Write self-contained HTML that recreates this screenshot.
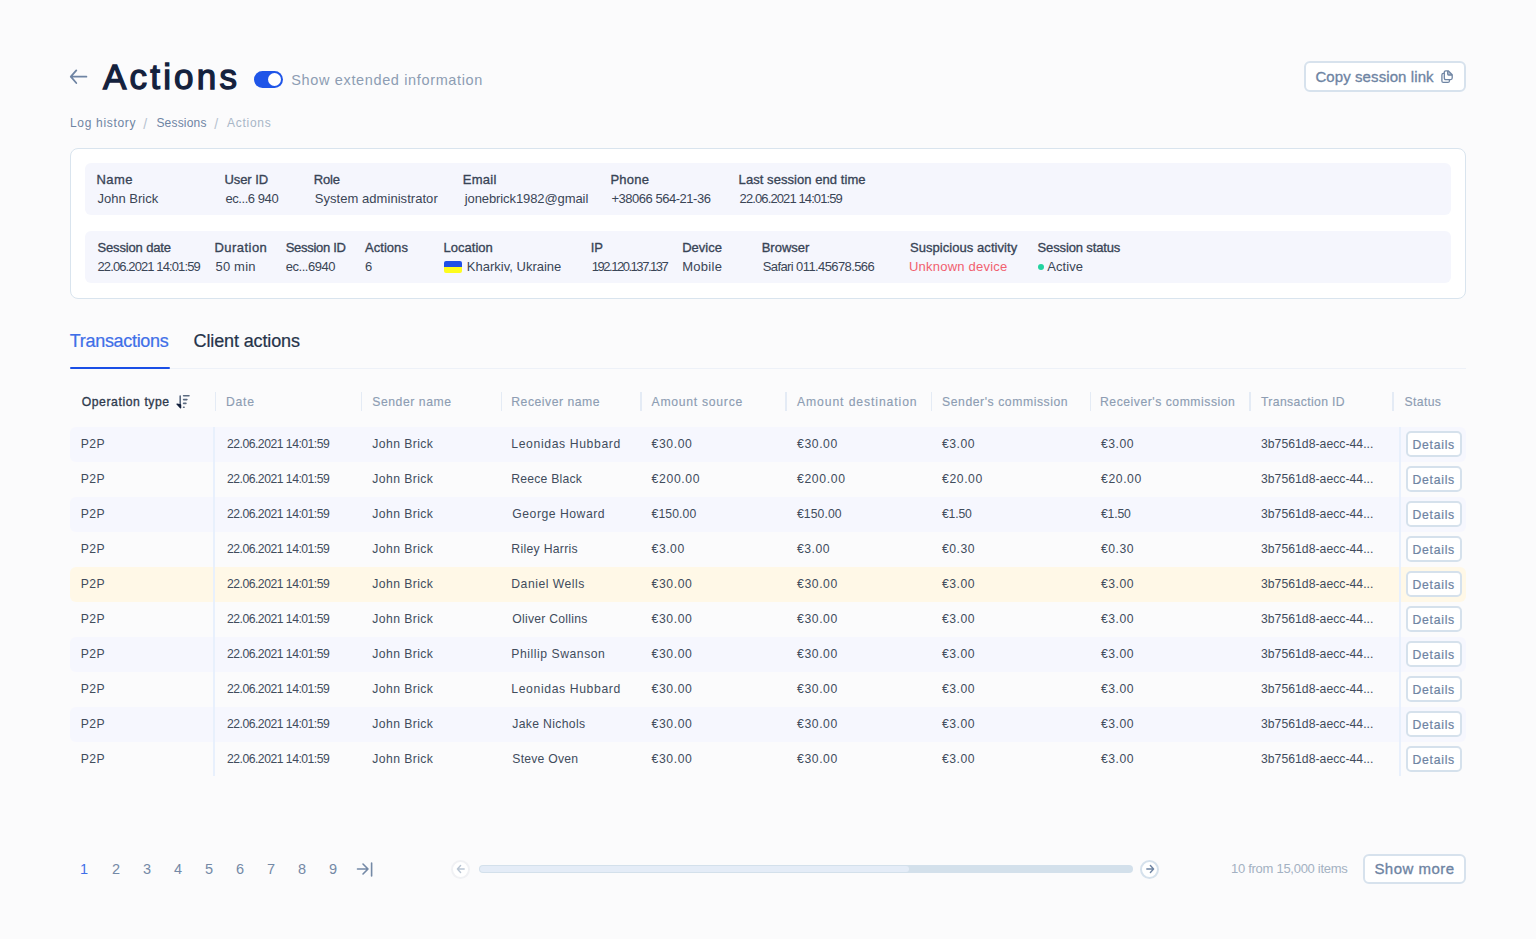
<!DOCTYPE html>
<html><head><meta charset="utf-8"><title>Actions</title>
<style>
html,body{margin:0;padding:0;}
body{width:1536px;height:939px;overflow:hidden;background:#fbfbfc;position:relative;font-family:"Liberation Sans",sans-serif;}
.t{position:absolute;white-space:nowrap;line-height:1;font-family:"Liberation Sans",sans-serif;}
.a{position:absolute;box-sizing:border-box;}
.btn{position:absolute;box-sizing:border-box;background:#fff;border:2px solid #d7e2ed;border-radius:6px;}
.row{position:absolute;left:70px;width:1396px;height:35px;border-radius:6px;}
.hd{position:absolute;top:392px;width:1.7px;height:19px;background:#e4ebf5;}
.det{position:absolute;left:1405.5px;width:56.5px;height:25.5px;box-sizing:border-box;background:#fff;border:2px solid #d5e1ec;border-radius:5px;}
</style></head>
<body>
<!-- back arrow -->
<svg class="a" style="left:68px;top:68px" width="22" height="18" viewBox="0 0 22 18">
  <path d="M8.3 2.4 L2.8 8.7 L8.3 15 M2.8 8.7 H18.4" fill="none" stroke="#6e84a3" stroke-width="1.8" stroke-linecap="round" stroke-linejoin="round"/>
</svg>
<!-- toggle -->
<div class="a" style="left:254px;top:70.7px;width:29px;height:17.4px;border-radius:8.7px;background:#1f55e8;"></div>
<div class="a" style="left:267.5px;top:72.8px;width:13.6px;height:13.4px;border-radius:50%;background:#fff;"></div>
<!-- copy button -->
<div class="btn" style="left:1303.5px;top:61px;width:162.5px;height:31px;"></div>
<svg class="a" style="left:1436px;top:66px" width="22" height="22" viewBox="0 0 22 22">
  <path d="M8.3 7.4 H7.4 Q5.9 7.4 5.9 8.9 V14.9 Q5.9 16.4 7.4 16.4 H11.9 Q13.4 16.4 13.4 14.9 V13.6" fill="none" stroke="#6e84a3" stroke-width="1.3" stroke-linejoin="round"/>
  <path d="M8.3 6.3 Q8.3 4.8 9.8 4.8 H12.2 L16.2 8.8 V12.1 Q16.2 13.6 14.7 13.6 H9.8 Q8.3 13.6 8.3 12.1 Z" fill="none" stroke="#6e84a3" stroke-width="1.3" stroke-linejoin="round"/>
  <path d="M11.7 5 V8.1 Q11.7 9 12.6 9 H16" fill="none" stroke="#6e84a3" stroke-width="1.3" stroke-linejoin="round"/>
  <path d="M12.2 5.3 L15.7 8.8 L12.2 8.8 Z" fill="#6e84a3" opacity="0.55"/>
</svg>
<!-- card -->
<div class="a" style="left:70px;top:147.5px;width:1396px;height:151px;background:#fff;border:1px solid #d9e4ee;border-radius:8px;"></div>
<div class="a" style="left:85px;top:163px;width:1366px;height:52px;background:#f5f6fd;border-radius:6px;"></div>
<div class="a" style="left:85px;top:231px;width:1366px;height:52px;background:#f5f6fd;border-radius:6px;"></div>
<!-- flag -->
<div class="a" style="left:444.3px;top:260.8px;width:17.5px;height:12px;border-radius:2px;overflow:hidden;">
  <div style="height:6px;background:#1f4fe8"></div><div style="height:6px;background:#fdfc1e"></div>
</div>
<!-- active dot -->
<div class="a" style="left:1037.5px;top:263.5px;width:6px;height:6px;border-radius:50%;background:#22d3a0;"></div>
<!-- tabs -->
<div class="a" style="left:70px;top:367.5px;width:1396px;height:1.5px;background:#edf1f8;"></div>
<div class="a" style="left:70px;top:366.8px;width:100px;height:2.2px;border-radius:1px;background:#1a4fe6;"></div>
<!-- header dividers -->
<div class="hd" style="left:214.7px"></div>
<div class="hd" style="left:360.7px"></div>
<div class="hd" style="left:500.7px"></div>
<div class="hd" style="left:640.2px"></div>
<div class="hd" style="left:785.2px"></div>
<div class="hd" style="left:930.7px"></div>
<div class="hd" style="left:1089.7px"></div>
<div class="hd" style="left:1249.2px"></div>
<div class="hd" style="left:1392.2px"></div>
<!-- sort icon -->
<svg class="a" style="left:175px;top:393px" width="17" height="17" viewBox="0 0 17 17">
  <path d="M5.2 3 V14" stroke="#5a6a80" stroke-width="1.6" stroke-linecap="round"/>
  <path d="M2 11.1 L5.6 14.7 L5.6 12 Z" fill="#14213d" stroke="#14213d" stroke-width="1.3" stroke-linejoin="round" stroke-linecap="round"/>
  <path d="M8.6 2.7 H14 M8.6 6.6 H11.9 M8.6 10.4 H10.9 M8.6 14.3 H9.1" stroke="#5a6a80" stroke-width="1.6" stroke-linecap="round"/>
</svg>
<!-- rows -->
<div class="row" style="top:426.5px;background:#f6f7fe"></div>
<div class="row" style="top:496.5px;background:#f6f7fe"></div>
<div class="row" style="top:566.5px;background:#fff8e7"></div>
<div class="row" style="top:636.5px;background:#f6f7fe"></div>
<div class="row" style="top:706.5px;background:#f6f7fe"></div>
<div class="a" style="left:213px;top:426.5px;width:2px;height:349px;background:#e8f0fc;"></div>
<div class="a" style="left:1399px;top:426.5px;width:2px;height:349px;background:#e8f0fc;"></div>
<!-- details buttons -->
<div class="det" style="top:431.3px"></div>
<div class="det" style="top:466.3px"></div>
<div class="det" style="top:501.3px"></div>
<div class="det" style="top:536.3px"></div>
<div class="det" style="top:571.3px"></div>
<div class="det" style="top:606.3px"></div>
<div class="det" style="top:641.3px"></div>
<div class="det" style="top:676.3px"></div>
<div class="det" style="top:711.3px"></div>
<div class="det" style="top:746.3px"></div>
<!-- pagination last icon -->
<svg class="a" style="left:355px;top:860px" width="19" height="18" viewBox="0 0 19 18">
  <path d="M2.5 9 H13 M8 4 L13 9 L8 14" fill="none" stroke="#7489a6" stroke-width="1.6" stroke-linecap="round" stroke-linejoin="round"/>
  <path d="M16.6 3.1 V15.9" stroke="#7489a6" stroke-width="1.6" stroke-linecap="round"/>
</svg>
<!-- scrollbar -->
<div class="a" style="left:451.3px;top:859.5px;width:19px;height:19px;border-radius:50%;background:#fff;border:2px solid #f0f1f4;"></div>
<svg class="a" style="left:455px;top:863px" width="12" height="12" viewBox="0 0 12 12">
  <path d="M5.6 2.5 L2.4 6 L5.6 9.5 M2.4 6 H9.2" fill="none" stroke="#b9c5d3" stroke-width="1.4" stroke-linecap="round" stroke-linejoin="round"/>
</svg>
<div class="a" style="left:478.5px;top:865px;width:654px;height:8px;border-radius:4px;background:#d3e0eb;"></div>
<div class="a" style="left:479.5px;top:866px;width:429px;height:6px;border-radius:3px;background:#e4ecf7;"></div>
<div class="a" style="left:1139.7px;top:859.5px;width:19.5px;height:19.5px;border-radius:50%;background:#fff;border:2px solid #d5e1ec;"></div>
<svg class="a" style="left:1143.5px;top:863px" width="12" height="12" viewBox="0 0 12 12">
  <path d="M6.4 2.5 L9.6 6 L6.4 9.5 M9.6 6 H2.8" fill="none" stroke="#6e84a3" stroke-width="1.4" stroke-linecap="round" stroke-linejoin="round"/>
</svg>
<!-- show more -->
<div class="btn" style="left:1363px;top:854.3px;width:102.5px;height:29.5px;"></div>
<div class="t" style="left:103.00px;top:58.85px;font-size:35px;color:#14213d;letter-spacing:3.187px;-webkit-text-stroke:1.3px #14213d;">Actions</div>
<div class="t" style="left:291.30px;top:73.27px;font-size:14.5px;color:#8d9db3;letter-spacing:0.639px;">Show extended information</div>
<div class="t" style="left:1315.40px;top:69.05px;font-size:15px;color:#6e84a3;letter-spacing:0.091px;-webkit-text-stroke:0.32px #6e84a3;">Copy session link</div>
<div class="t" style="left:70.00px;top:117.00px;font-size:12px;color:#6e84a3;letter-spacing:0.680px;">Log history</div>
<div class="t" style="left:143.30px;top:116.50px;font-size:14px;color:#b7c3d1;">/</div>
<div class="t" style="left:156.40px;top:117.00px;font-size:12px;color:#6e84a3;letter-spacing:0.201px;">Sessions</div>
<div class="t" style="left:214.30px;top:116.50px;font-size:14px;color:#b7c3d1;">/</div>
<div class="t" style="left:227.00px;top:117.00px;font-size:12px;color:#a8b6c7;letter-spacing:0.725px;">Actions</div>
<div class="t" style="left:96.50px;top:173.45px;font-size:13.0px;color:#384456;letter-spacing:0.411px;-webkit-text-stroke:0.32px #384456;">Name</div>
<div class="t" style="left:97.50px;top:192.45px;font-size:13.0px;color:#3a4556;">John Brick</div>
<div class="t" style="left:224.50px;top:173.45px;font-size:13.0px;color:#384456;letter-spacing:-0.082px;-webkit-text-stroke:0.32px #384456;">User ID</div>
<div class="t" style="left:225.50px;top:192.45px;font-size:13.0px;color:#3a4556;letter-spacing:-0.441px;">ec...6 940</div>
<div class="t" style="left:313.80px;top:173.45px;font-size:13.0px;color:#384456;letter-spacing:-0.209px;-webkit-text-stroke:0.32px #384456;">Role</div>
<div class="t" style="left:314.80px;top:192.45px;font-size:13.0px;color:#3a4556;letter-spacing:0.044px;">System administrator</div>
<div class="t" style="left:462.70px;top:173.45px;font-size:13.0px;color:#384456;letter-spacing:0.315px;-webkit-text-stroke:0.32px #384456;">Email</div>
<div class="t" style="left:464.70px;top:192.45px;font-size:13.0px;color:#3a4556;letter-spacing:-0.090px;">jonebrick1982@gmail</div>
<div class="t" style="left:610.40px;top:173.45px;font-size:13.0px;color:#384456;letter-spacing:0.255px;-webkit-text-stroke:0.32px #384456;">Phone</div>
<div class="t" style="left:611.40px;top:192.45px;font-size:13.0px;color:#3a4556;letter-spacing:-0.473px;">+38066 564-21-36</div>
<div class="t" style="left:738.60px;top:173.45px;font-size:13.0px;color:#384456;letter-spacing:0.059px;-webkit-text-stroke:0.32px #384456;">Last session end time</div>
<div class="t" style="left:739.60px;top:192.45px;font-size:13.0px;color:#3a4556;letter-spacing:-0.892px;">22.06.2021 14:01:59</div>
<div class="t" style="left:97.50px;top:241.25px;font-size:13.0px;color:#384456;letter-spacing:-0.150px;-webkit-text-stroke:0.32px #384456;">Session date</div>
<div class="t" style="left:97.50px;top:260.45px;font-size:13.0px;color:#3a4556;letter-spacing:-0.892px;">22.06.2021 14:01:59</div>
<div class="t" style="left:214.50px;top:241.25px;font-size:13.0px;color:#384456;letter-spacing:0.453px;-webkit-text-stroke:0.32px #384456;">Duration</div>
<div class="t" style="left:215.50px;top:260.45px;font-size:13.0px;color:#3a4556;letter-spacing:0.182px;">50 min</div>
<div class="t" style="left:285.70px;top:241.25px;font-size:13.0px;color:#384456;letter-spacing:-0.299px;-webkit-text-stroke:0.32px #384456;">Session ID</div>
<div class="t" style="left:285.70px;top:260.45px;font-size:13.0px;color:#3a4556;letter-spacing:-0.457px;">ec...6940</div>
<div class="t" style="left:365.00px;top:241.25px;font-size:13.0px;color:#384456;letter-spacing:0.042px;-webkit-text-stroke:0.32px #384456;">Actions</div>
<div class="t" style="left:365.00px;top:260.45px;font-size:13.0px;color:#3a4556;">6</div>
<div class="t" style="left:443.60px;top:241.25px;font-size:13.0px;color:#384456;-webkit-text-stroke:0.32px #384456;">Location</div>
<div class="t" style="left:466.80px;top:260.45px;font-size:13.0px;color:#3a4556;letter-spacing:0.009px;">Kharkiv, Ukraine</div>
<div class="t" style="left:590.70px;top:241.25px;font-size:13.0px;color:#384456;-webkit-text-stroke:0.32px #384456;">IP</div>
<div class="t" style="left:591.70px;top:260.45px;font-size:13.0px;color:#3a4556;letter-spacing:-1.462px;">192.120.137.137</div>
<div class="t" style="left:682.20px;top:241.25px;font-size:13.0px;color:#384456;letter-spacing:-0.005px;-webkit-text-stroke:0.32px #384456;">Device</div>
<div class="t" style="left:682.20px;top:260.45px;font-size:13.0px;color:#3a4556;letter-spacing:0.287px;">Mobile</div>
<div class="t" style="left:761.70px;top:241.25px;font-size:13.0px;color:#384456;letter-spacing:-0.011px;-webkit-text-stroke:0.32px #384456;">Browser</div>
<div class="t" style="left:762.70px;top:260.45px;font-size:13.0px;color:#3a4556;letter-spacing:-0.596px;">Safari 011.45678.566</div>
<div class="t" style="left:910.00px;top:241.25px;font-size:13.0px;color:#384456;letter-spacing:0.054px;-webkit-text-stroke:0.32px #384456;">Suspicious activity</div>
<div class="t" style="left:909.00px;top:260.45px;font-size:13.0px;color:#f1606f;letter-spacing:0.219px;">Unknown device</div>
<div class="t" style="left:1037.60px;top:241.25px;font-size:13.0px;color:#384456;letter-spacing:-0.143px;-webkit-text-stroke:0.32px #384456;">Session status</div>
<div class="t" style="left:1047.30px;top:260.45px;font-size:13.0px;color:#3a4556;letter-spacing:0.066px;">Active</div>
<div class="t" style="left:69.80px;top:331.90px;font-size:18px;color:#3f6fe8;letter-spacing:-0.309px;-webkit-text-stroke:0.22px #3f6fe8;">Transactions</div>
<div class="t" style="left:193.60px;top:331.90px;font-size:18px;color:#26334a;letter-spacing:-0.129px;-webkit-text-stroke:0.22px #26334a;">Client actions</div>
<div class="t" style="left:81.70px;top:396.23px;font-size:12.2px;color:#2e3a4d;letter-spacing:0.578px;-webkit-text-stroke:0.32px #2e3a4d;">Operation type</div>
<div class="t" style="left:226.00px;top:396.23px;font-size:12.2px;color:#8d9db3;letter-spacing:0.761px;-webkit-text-stroke:0.15px #8d9db3;">Date</div>
<div class="t" style="left:372.30px;top:396.23px;font-size:12.2px;color:#8d9db3;letter-spacing:0.546px;-webkit-text-stroke:0.15px #8d9db3;">Sender name</div>
<div class="t" style="left:511.30px;top:396.23px;font-size:12.2px;color:#8d9db3;letter-spacing:0.514px;-webkit-text-stroke:0.15px #8d9db3;">Receiver name</div>
<div class="t" style="left:651.60px;top:396.23px;font-size:12.2px;color:#8d9db3;letter-spacing:0.722px;-webkit-text-stroke:0.15px #8d9db3;">Amount source</div>
<div class="t" style="left:797.00px;top:396.23px;font-size:12.2px;color:#8d9db3;letter-spacing:0.899px;-webkit-text-stroke:0.15px #8d9db3;">Amount destination</div>
<div class="t" style="left:942.00px;top:396.23px;font-size:12.2px;color:#8d9db3;letter-spacing:0.566px;-webkit-text-stroke:0.15px #8d9db3;">Sender's commission</div>
<div class="t" style="left:1100.00px;top:396.23px;font-size:12.2px;color:#8d9db3;letter-spacing:0.530px;-webkit-text-stroke:0.15px #8d9db3;">Receiver's commission</div>
<div class="t" style="left:1261.00px;top:396.23px;font-size:12.2px;color:#8d9db3;letter-spacing:0.374px;-webkit-text-stroke:0.15px #8d9db3;">Transaction ID</div>
<div class="t" style="left:1404.50px;top:396.23px;font-size:12.2px;color:#8d9db3;letter-spacing:0.379px;-webkit-text-stroke:0.15px #8d9db3;">Status</div>
<div class="t" style="left:80.70px;top:438.33px;font-size:12.2px;color:#414c5c;letter-spacing:0.396px;">P2P</div>
<div class="t" style="left:227.00px;top:438.33px;font-size:12.2px;color:#414c5c;letter-spacing:-0.503px;">22.06.2021 14:01:59</div>
<div class="t" style="left:372.30px;top:438.33px;font-size:12.2px;color:#414c5c;letter-spacing:0.411px;">John Brick</div>
<div class="t" style="left:511.30px;top:438.33px;font-size:12.2px;color:#414c5c;letter-spacing:0.625px;">Leonidas Hubbard</div>
<div class="t" style="left:651.60px;top:438.33px;font-size:12.2px;color:#414c5c;letter-spacing:0.600px;">€30.00</div>
<div class="t" style="left:797.00px;top:438.33px;font-size:12.2px;color:#414c5c;letter-spacing:0.600px;">€30.00</div>
<div class="t" style="left:942.00px;top:438.33px;font-size:12.2px;color:#414c5c;letter-spacing:0.520px;">€3.00</div>
<div class="t" style="left:1101.00px;top:438.33px;font-size:12.2px;color:#414c5c;letter-spacing:0.520px;">€3.00</div>
<div class="t" style="left:1261.00px;top:438.33px;font-size:12.2px;color:#414c5c;letter-spacing:0.033px;">3b7561d8-aecc-44...</div>
<div class="t" style="left:1412.60px;top:438.53px;font-size:12.2px;color:#6e84a3;letter-spacing:0.720px;-webkit-text-stroke:0.22px #6e84a3;">Details</div>
<div class="t" style="left:80.70px;top:473.33px;font-size:12.2px;color:#414c5c;letter-spacing:0.396px;">P2P</div>
<div class="t" style="left:227.00px;top:473.33px;font-size:12.2px;color:#414c5c;letter-spacing:-0.503px;">22.06.2021 14:01:59</div>
<div class="t" style="left:372.30px;top:473.33px;font-size:12.2px;color:#414c5c;letter-spacing:0.411px;">John Brick</div>
<div class="t" style="left:511.30px;top:473.33px;font-size:12.2px;color:#414c5c;letter-spacing:0.208px;">Reece Black</div>
<div class="t" style="left:651.60px;top:473.33px;font-size:12.2px;color:#414c5c;letter-spacing:0.654px;">€200.00</div>
<div class="t" style="left:797.00px;top:473.33px;font-size:12.2px;color:#414c5c;letter-spacing:0.654px;">€200.00</div>
<div class="t" style="left:942.00px;top:473.33px;font-size:12.2px;color:#414c5c;letter-spacing:0.600px;">€20.00</div>
<div class="t" style="left:1101.00px;top:473.33px;font-size:12.2px;color:#414c5c;letter-spacing:0.600px;">€20.00</div>
<div class="t" style="left:1261.00px;top:473.33px;font-size:12.2px;color:#414c5c;letter-spacing:0.033px;">3b7561d8-aecc-44...</div>
<div class="t" style="left:1412.60px;top:473.53px;font-size:12.2px;color:#6e84a3;letter-spacing:0.720px;-webkit-text-stroke:0.22px #6e84a3;">Details</div>
<div class="t" style="left:80.70px;top:508.33px;font-size:12.2px;color:#414c5c;letter-spacing:0.396px;">P2P</div>
<div class="t" style="left:227.00px;top:508.33px;font-size:12.2px;color:#414c5c;letter-spacing:-0.503px;">22.06.2021 14:01:59</div>
<div class="t" style="left:372.30px;top:508.33px;font-size:12.2px;color:#414c5c;letter-spacing:0.411px;">John Brick</div>
<div class="t" style="left:512.30px;top:508.33px;font-size:12.2px;color:#414c5c;letter-spacing:0.520px;">George Howard</div>
<div class="t" style="left:651.60px;top:508.33px;font-size:12.2px;color:#414c5c;letter-spacing:0.087px;">€150.00</div>
<div class="t" style="left:797.00px;top:508.33px;font-size:12.2px;color:#414c5c;letter-spacing:0.087px;">€150.00</div>
<div class="t" style="left:942.00px;top:508.33px;font-size:12.2px;color:#414c5c;letter-spacing:-0.180px;">€1.50</div>
<div class="t" style="left:1101.00px;top:508.33px;font-size:12.2px;color:#414c5c;letter-spacing:-0.180px;">€1.50</div>
<div class="t" style="left:1261.00px;top:508.33px;font-size:12.2px;color:#414c5c;letter-spacing:0.033px;">3b7561d8-aecc-44...</div>
<div class="t" style="left:1412.60px;top:508.53px;font-size:12.2px;color:#6e84a3;letter-spacing:0.720px;-webkit-text-stroke:0.22px #6e84a3;">Details</div>
<div class="t" style="left:80.70px;top:543.33px;font-size:12.2px;color:#414c5c;letter-spacing:0.396px;">P2P</div>
<div class="t" style="left:227.00px;top:543.33px;font-size:12.2px;color:#414c5c;letter-spacing:-0.503px;">22.06.2021 14:01:59</div>
<div class="t" style="left:372.30px;top:543.33px;font-size:12.2px;color:#414c5c;letter-spacing:0.411px;">John Brick</div>
<div class="t" style="left:511.30px;top:543.33px;font-size:12.2px;color:#414c5c;letter-spacing:0.311px;">Riley Harris</div>
<div class="t" style="left:651.60px;top:543.33px;font-size:12.2px;color:#414c5c;letter-spacing:0.520px;">€3.00</div>
<div class="t" style="left:797.00px;top:543.33px;font-size:12.2px;color:#414c5c;letter-spacing:0.520px;">€3.00</div>
<div class="t" style="left:942.00px;top:543.33px;font-size:12.2px;color:#414c5c;letter-spacing:0.520px;">€0.30</div>
<div class="t" style="left:1101.00px;top:543.33px;font-size:12.2px;color:#414c5c;letter-spacing:0.520px;">€0.30</div>
<div class="t" style="left:1261.00px;top:543.33px;font-size:12.2px;color:#414c5c;letter-spacing:0.033px;">3b7561d8-aecc-44...</div>
<div class="t" style="left:1412.60px;top:543.53px;font-size:12.2px;color:#6e84a3;letter-spacing:0.720px;-webkit-text-stroke:0.22px #6e84a3;">Details</div>
<div class="t" style="left:80.70px;top:578.33px;font-size:12.2px;color:#414c5c;letter-spacing:0.396px;">P2P</div>
<div class="t" style="left:227.00px;top:578.33px;font-size:12.2px;color:#414c5c;letter-spacing:-0.503px;">22.06.2021 14:01:59</div>
<div class="t" style="left:372.30px;top:578.33px;font-size:12.2px;color:#414c5c;letter-spacing:0.411px;">John Brick</div>
<div class="t" style="left:511.30px;top:578.33px;font-size:12.2px;color:#414c5c;letter-spacing:0.508px;">Daniel Wells</div>
<div class="t" style="left:651.60px;top:578.33px;font-size:12.2px;color:#414c5c;letter-spacing:0.600px;">€30.00</div>
<div class="t" style="left:797.00px;top:578.33px;font-size:12.2px;color:#414c5c;letter-spacing:0.600px;">€30.00</div>
<div class="t" style="left:942.00px;top:578.33px;font-size:12.2px;color:#414c5c;letter-spacing:0.520px;">€3.00</div>
<div class="t" style="left:1101.00px;top:578.33px;font-size:12.2px;color:#414c5c;letter-spacing:0.520px;">€3.00</div>
<div class="t" style="left:1261.00px;top:578.33px;font-size:12.2px;color:#414c5c;letter-spacing:0.033px;">3b7561d8-aecc-44...</div>
<div class="t" style="left:1412.60px;top:578.53px;font-size:12.2px;color:#6e84a3;letter-spacing:0.720px;-webkit-text-stroke:0.22px #6e84a3;">Details</div>
<div class="t" style="left:80.70px;top:613.33px;font-size:12.2px;color:#414c5c;letter-spacing:0.396px;">P2P</div>
<div class="t" style="left:227.00px;top:613.33px;font-size:12.2px;color:#414c5c;letter-spacing:-0.503px;">22.06.2021 14:01:59</div>
<div class="t" style="left:372.30px;top:613.33px;font-size:12.2px;color:#414c5c;letter-spacing:0.411px;">John Brick</div>
<div class="t" style="left:512.30px;top:613.33px;font-size:12.2px;color:#414c5c;letter-spacing:0.254px;">Oliver Collins</div>
<div class="t" style="left:651.60px;top:613.33px;font-size:12.2px;color:#414c5c;letter-spacing:0.600px;">€30.00</div>
<div class="t" style="left:797.00px;top:613.33px;font-size:12.2px;color:#414c5c;letter-spacing:0.600px;">€30.00</div>
<div class="t" style="left:942.00px;top:613.33px;font-size:12.2px;color:#414c5c;letter-spacing:0.520px;">€3.00</div>
<div class="t" style="left:1101.00px;top:613.33px;font-size:12.2px;color:#414c5c;letter-spacing:0.520px;">€3.00</div>
<div class="t" style="left:1261.00px;top:613.33px;font-size:12.2px;color:#414c5c;letter-spacing:0.033px;">3b7561d8-aecc-44...</div>
<div class="t" style="left:1412.60px;top:613.53px;font-size:12.2px;color:#6e84a3;letter-spacing:0.720px;-webkit-text-stroke:0.22px #6e84a3;">Details</div>
<div class="t" style="left:80.70px;top:648.33px;font-size:12.2px;color:#414c5c;letter-spacing:0.396px;">P2P</div>
<div class="t" style="left:227.00px;top:648.33px;font-size:12.2px;color:#414c5c;letter-spacing:-0.503px;">22.06.2021 14:01:59</div>
<div class="t" style="left:372.30px;top:648.33px;font-size:12.2px;color:#414c5c;letter-spacing:0.411px;">John Brick</div>
<div class="t" style="left:511.30px;top:648.33px;font-size:12.2px;color:#414c5c;letter-spacing:0.539px;">Phillip Swanson</div>
<div class="t" style="left:651.60px;top:648.33px;font-size:12.2px;color:#414c5c;letter-spacing:0.600px;">€30.00</div>
<div class="t" style="left:797.00px;top:648.33px;font-size:12.2px;color:#414c5c;letter-spacing:0.600px;">€30.00</div>
<div class="t" style="left:942.00px;top:648.33px;font-size:12.2px;color:#414c5c;letter-spacing:0.520px;">€3.00</div>
<div class="t" style="left:1101.00px;top:648.33px;font-size:12.2px;color:#414c5c;letter-spacing:0.520px;">€3.00</div>
<div class="t" style="left:1261.00px;top:648.33px;font-size:12.2px;color:#414c5c;letter-spacing:0.033px;">3b7561d8-aecc-44...</div>
<div class="t" style="left:1412.60px;top:648.53px;font-size:12.2px;color:#6e84a3;letter-spacing:0.720px;-webkit-text-stroke:0.22px #6e84a3;">Details</div>
<div class="t" style="left:80.70px;top:683.33px;font-size:12.2px;color:#414c5c;letter-spacing:0.396px;">P2P</div>
<div class="t" style="left:227.00px;top:683.33px;font-size:12.2px;color:#414c5c;letter-spacing:-0.503px;">22.06.2021 14:01:59</div>
<div class="t" style="left:372.30px;top:683.33px;font-size:12.2px;color:#414c5c;letter-spacing:0.411px;">John Brick</div>
<div class="t" style="left:511.30px;top:683.33px;font-size:12.2px;color:#414c5c;letter-spacing:0.625px;">Leonidas Hubbard</div>
<div class="t" style="left:651.60px;top:683.33px;font-size:12.2px;color:#414c5c;letter-spacing:0.600px;">€30.00</div>
<div class="t" style="left:797.00px;top:683.33px;font-size:12.2px;color:#414c5c;letter-spacing:0.600px;">€30.00</div>
<div class="t" style="left:942.00px;top:683.33px;font-size:12.2px;color:#414c5c;letter-spacing:0.520px;">€3.00</div>
<div class="t" style="left:1101.00px;top:683.33px;font-size:12.2px;color:#414c5c;letter-spacing:0.520px;">€3.00</div>
<div class="t" style="left:1261.00px;top:683.33px;font-size:12.2px;color:#414c5c;letter-spacing:0.033px;">3b7561d8-aecc-44...</div>
<div class="t" style="left:1412.60px;top:683.53px;font-size:12.2px;color:#6e84a3;letter-spacing:0.720px;-webkit-text-stroke:0.22px #6e84a3;">Details</div>
<div class="t" style="left:80.70px;top:718.33px;font-size:12.2px;color:#414c5c;letter-spacing:0.396px;">P2P</div>
<div class="t" style="left:227.00px;top:718.33px;font-size:12.2px;color:#414c5c;letter-spacing:-0.503px;">22.06.2021 14:01:59</div>
<div class="t" style="left:372.30px;top:718.33px;font-size:12.2px;color:#414c5c;letter-spacing:0.411px;">John Brick</div>
<div class="t" style="left:512.30px;top:718.33px;font-size:12.2px;color:#414c5c;letter-spacing:0.337px;">Jake Nichols</div>
<div class="t" style="left:651.60px;top:718.33px;font-size:12.2px;color:#414c5c;letter-spacing:0.600px;">€30.00</div>
<div class="t" style="left:797.00px;top:718.33px;font-size:12.2px;color:#414c5c;letter-spacing:0.600px;">€30.00</div>
<div class="t" style="left:942.00px;top:718.33px;font-size:12.2px;color:#414c5c;letter-spacing:0.520px;">€3.00</div>
<div class="t" style="left:1101.00px;top:718.33px;font-size:12.2px;color:#414c5c;letter-spacing:0.520px;">€3.00</div>
<div class="t" style="left:1261.00px;top:718.33px;font-size:12.2px;color:#414c5c;letter-spacing:0.033px;">3b7561d8-aecc-44...</div>
<div class="t" style="left:1412.60px;top:718.53px;font-size:12.2px;color:#6e84a3;letter-spacing:0.720px;-webkit-text-stroke:0.22px #6e84a3;">Details</div>
<div class="t" style="left:80.70px;top:753.33px;font-size:12.2px;color:#414c5c;letter-spacing:0.396px;">P2P</div>
<div class="t" style="left:227.00px;top:753.33px;font-size:12.2px;color:#414c5c;letter-spacing:-0.503px;">22.06.2021 14:01:59</div>
<div class="t" style="left:372.30px;top:753.33px;font-size:12.2px;color:#414c5c;letter-spacing:0.411px;">John Brick</div>
<div class="t" style="left:512.30px;top:753.33px;font-size:12.2px;color:#414c5c;letter-spacing:0.233px;">Steve Oven</div>
<div class="t" style="left:651.60px;top:753.33px;font-size:12.2px;color:#414c5c;letter-spacing:0.600px;">€30.00</div>
<div class="t" style="left:797.00px;top:753.33px;font-size:12.2px;color:#414c5c;letter-spacing:0.600px;">€30.00</div>
<div class="t" style="left:942.00px;top:753.33px;font-size:12.2px;color:#414c5c;letter-spacing:0.520px;">€3.00</div>
<div class="t" style="left:1101.00px;top:753.33px;font-size:12.2px;color:#414c5c;letter-spacing:0.520px;">€3.00</div>
<div class="t" style="left:1261.00px;top:753.33px;font-size:12.2px;color:#414c5c;letter-spacing:0.033px;">3b7561d8-aecc-44...</div>
<div class="t" style="left:1412.60px;top:753.53px;font-size:12.2px;color:#6e84a3;letter-spacing:0.720px;-webkit-text-stroke:0.22px #6e84a3;">Details</div>
<div class="t" style="left:80.10px;top:862.27px;font-size:14.5px;color:#3f6fe8;">1</div>
<div class="t" style="left:112.00px;top:862.27px;font-size:14.5px;color:#7489a6;">2</div>
<div class="t" style="left:143.00px;top:862.27px;font-size:14.5px;color:#7489a6;">3</div>
<div class="t" style="left:174.00px;top:862.27px;font-size:14.5px;color:#7489a6;">4</div>
<div class="t" style="left:205.00px;top:862.27px;font-size:14.5px;color:#7489a6;">5</div>
<div class="t" style="left:236.00px;top:862.27px;font-size:14.5px;color:#7489a6;">6</div>
<div class="t" style="left:267.00px;top:862.27px;font-size:14.5px;color:#7489a6;">7</div>
<div class="t" style="left:298.00px;top:862.27px;font-size:14.5px;color:#7489a6;">8</div>
<div class="t" style="left:329.00px;top:862.27px;font-size:14.5px;color:#7489a6;">9</div>
<div class="t" style="left:1231.00px;top:862.15px;font-size:13px;color:#a3b1c2;letter-spacing:-0.280px;">10 from 15,000 items</div>
<div class="t" style="left:1374.40px;top:860.85px;font-size:15px;color:#6e84a3;letter-spacing:0.470px;-webkit-text-stroke:0.32px #6e84a3;">Show more</div>
</body></html>
